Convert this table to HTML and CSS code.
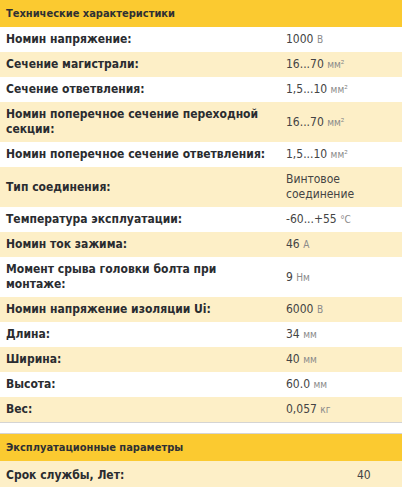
FILE: index.html
```html
<!DOCTYPE html>
<html>
<head>
<meta charset="utf-8">
<link rel="stylesheet" href="styles.css">
</head>
<body>
<table class="spec spec-main">
  <colgroup><col class="c-name"><col class="c-val"></colgroup>
  <tr class="head"><th colspan="2">Технические характеристики</th></tr>
  <tr><td class="name">Номин напряжение:</td><td class="val">1000 <span class="u">В</span></td></tr>
  <tr class="alt"><td class="name">Сечение магистрали:</td><td class="val">16...70 <span class="u">мм²</span></td></tr>
  <tr><td class="name">Сечение ответвления:</td><td class="val">1,5...10 <span class="u">мм²</span></td></tr>
  <tr class="alt"><td class="name">Номин поперечное сечение переходной секции:</td><td class="val">16...70 <span class="u">мм²</span></td></tr>
  <tr><td class="name">Номин поперечное сечение ответвления:</td><td class="val">1,5...10 <span class="u">мм²</span></td></tr>
  <tr class="alt"><td class="name">Тип соединения:</td><td class="val">Винтовое соединение</td></tr>
  <tr><td class="name">Температура эксплуатации:</td><td class="val">-60...+55 <span class="u">°C</span></td></tr>
  <tr class="alt"><td class="name">Номин ток зажима:</td><td class="val">46 <span class="u">А</span></td></tr>
  <tr><td class="name">Момент срыва головки болта при монтаже:</td><td class="val">9 <span class="u">Нм</span></td></tr>
  <tr class="alt"><td class="name">Номин напряжение изоляции Ui:</td><td class="val">6000 <span class="u">В</span></td></tr>
  <tr><td class="name">Длина:</td><td class="val">34 <span class="u">мм</span></td></tr>
  <tr class="alt"><td class="name">Ширина:</td><td class="val">40 <span class="u">мм</span></td></tr>
  <tr><td class="name">Высота:</td><td class="val">60.0 <span class="u">мм</span></td></tr>
  <tr class="alt"><td class="name">Вес:</td><td class="val">0,057 <span class="u">кг</span></td></tr>
</table>
<table class="spec spec-ops">
  <colgroup><col class="c-name2"><col class="c-val"></colgroup>
  <tr class="head"><th colspan="2">Эксплуатационные параметры</th></tr>
  <tr class="alt"><td class="name">Срок службы, Лет:</td><td class="val">40</td></tr>
</table>
</body>
</html>
```
FILE: styles.css
```css
html, body { margin: 0; padding: 0; background: #fff; }
body { font-family: "DejaVu Sans Condensed", "DejaVu Sans", sans-serif; color: #333; }
.spec { width: 402px; border-collapse: collapse; border-spacing: 0; table-layout: fixed; }
.c-name { width: 280px; }
.c-name2 { width: 351px; }
.spec-main { border-bottom: 1px solid #d4d4d4; }
.spec-ops { margin-top: 10px; border-top: 1px solid #d4d4d4; }
.head th {
  background: #fbca30;
  text-align: left;
  font-size: 11px;
  font-weight: bold;
  color: #2f3033;
  height: 27px;
  padding: 0 6px;
  line-height: 15px;
}
.spec-ops .head th { height: 27px; }
.alt td { background: #fdefc7; }
td { vertical-align: middle; line-height: 15px; padding: 5px 6px; }
.name { font-size: 12px; font-weight: bold; color: #2a2c30; }
.val { font-size: 12px; color: #444; }
.u { font-size: 10px; color: #8a8a8a; }
.spec-ops td { padding-top: 7px; padding-bottom: 6px; }
```
